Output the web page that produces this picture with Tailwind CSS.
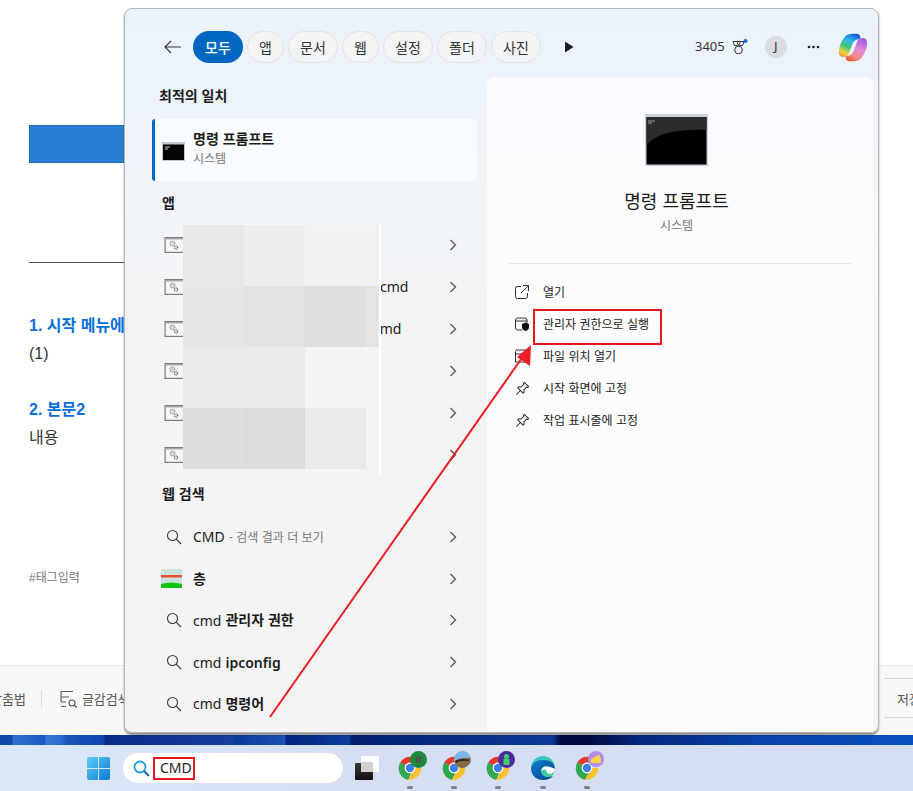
<!DOCTYPE html>
<html lang="ko">

<head>
    <meta charset="UTF-8">
    <title>Windows Search</title>
    <script src="https://cdn.jsdelivr.net/npm/@tailwindcss/browser@4"></script>
</head>

<body class="relative w-[913px] h-[791px] overflow-hidden bg-white font-['Noto_Sans_CJK_KR','Noto_Sans',sans-serif] text-[#1b1b1b]">
    <svg class="absolute w-0 h-0">
        <defs>
            <symbol id="search" viewBox="0 0 16 16">
                <circle cx="6.5" cy="6.5" r="5" fill="none" stroke="#3a3a3a" stroke-width="1.1" />
                <path d="M10.2 10.2 15 15" stroke="#3a3a3a" stroke-width="1.2" />
            </symbol>
            <symbol id="chev" viewBox="0 0 8 12">
                <path d="M1.5 1 6.5 6 1.5 11" fill="none" stroke="#5c5c5c" stroke-width="1.4" />
            </symbol>
            <symbol id="gears" viewBox="0 0 20 16">
                <rect x="0.6" y="0.6" width="18.800" height="14.800" fill="#f6f6f6" stroke="#7d7d7d" stroke-width="1.2" />
                <rect x="1" y="1" width="18" height="1.500" fill="#a8a8a8" />
                <circle cx="8" cy="6.500" r="2.300" fill="#d5dbe2" stroke="#8e98a4" stroke-width="1.200" stroke-dasharray="1 .6" />
                <circle cx="11.500" cy="10.500" r="1.600" fill="#e8e8e8" stroke="#5e6670" stroke-width="1.100" stroke-dasharray="1 .6" />
            </symbol>
            <symbol id="pin" viewBox="0 0 16 16">
                <path d="M10 1.5 14.5 6 13.5 7 12.5 6.6 9.6 9.5 9.6 12.4 8.6 13 3 7.4 3.6 6.4 6.5 6.4 9.4 3.5 9 2.5ZM5.6 10.4 1.5 14.5" fill="none" stroke="#2e2e2e" stroke-width="1.1" stroke-linejoin="round" />
            </symbol>
            <symbol id="chrome" viewBox="0 0 24 24">
                <path d="M12 12 2.2 6.5A12 12 0 0 1 23.2 7.6H12Z" fill="#e5392f" />
                <path d="M12 12 2.2 6.5A12 12 0 0 0 10 23.9L15 14Z" fill="#2fa84f" />
                <path d="M12 12H23.2A12 12 0 0 1 10 23.9L15 14Z" fill="#fbc02d" />
                <circle cx="12" cy="12" r="5.4" fill="#fff" />
                <circle cx="12" cy="12" r="4.2" fill="#3b82e6" />
            </symbol>
            <linearGradient id="edgeA" x1="0" y1="0" x2="1" y2="1">
                <stop offset="0" stop-color="#35c7d8" />
                <stop offset="1" stop-color="#3fd07f" />
            </linearGradient>
            <linearGradient id="edgeB" x1="0" y1="0" x2="1" y2="1">
                <stop offset="0" stop-color="#0f7fd0" />
                <stop offset="1" stop-color="#0a3f8f" />
            </linearGradient>
            <linearGradient id="winLogo" x1="0" y1="0" x2="1" y2="1">
                <stop offset="0" stop-color="#5fd0f5" />
                <stop offset="1" stop-color="#0a78d6" />
            </linearGradient>
            <linearGradient id="copL" x1="0.7" y1="0" x2="0.3" y2="1">
                <stop offset="0" stop-color="#1658d8" />
                <stop offset="0.3" stop-color="#2bb5ea" />
                <stop offset="0.6" stop-color="#3fc779" />
                <stop offset="0.85" stop-color="#f0d23a" />
                <stop offset="1" stop-color="#f39a3a" />
            </linearGradient>
            <linearGradient id="copR" x1="0.7" y1="0" x2="0.3" y2="1">
                <stop offset="0" stop-color="#f0583a" />
                <stop offset="0.2" stop-color="#f58a80" />
                <stop offset="0.55" stop-color="#e58ad8" />
                <stop offset="1" stop-color="#9a5be8" />
            </linearGradient>
        </defs>
    </svg>

    <!-- document behind the flyout -->
    <main class="w-[860px] h-[665px] pl-[29px] pt-[125px] font-['Liberation_Sans','Noto_Sans_CJK_KR',sans-serif]">
        <div class="h-[38px] bg-[#2a7ed2] border border-[#1f6fbc]"></div>
        <div class="mt-[99px] border-t border-[#555]"></div>
        <h2 class="mt-[51px] h-[24px] leading-[24px] text-[16px] font-bold text-[#0a6fdc]">1. 시작 메뉴에</h2>
        <p class="mt-[4px] h-[24px] leading-[24px] text-[16px] text-[#333]">(1)</p>
        <h2 class="mt-[32px] h-[24px] leading-[24px] text-[16px] font-bold text-[#0a6fdc]">2. 본문2</h2>
        <p class="mt-[4px] h-[24px] leading-[24px] text-[16px] text-[#333]">내용</p>
        <p class="mt-[119px] h-[18px] leading-[18px] text-[12px] text-[#777]">#태그입력</p>
    </main>

    <!-- editor toolbar -->
    <div class="relative h-[70px] bg-[#f8f8f8] border-t border-[#e8e8e8]">
        <div class="flex items-center h-[66px] text-[13px] text-[#555]">
            <span class="ml-[-10px]">맞춤법</span>
            <span class="ml-[15px] h-[18px] border-l border-[#dcdcdc]"></span>
            <svg class="ml-[18px] w-[18px] h-[18px]" viewBox="0 0 18 18" fill="none" stroke="#555" stroke-width="1.1">
                <path d="M1 1.5H13M1 1.5V12M1 7H9M1 12H6M1 16.5H6" />
                <circle cx="12" cy="13" r="3" />
                <path d="M14.2 15.2 17 17.5" />
            </svg>
            <span class="ml-[4px]">글감검색</span>
        </div>
        <div class="absolute left-[884px] top-[12px] w-[40px] h-[40px] border-y border-[#d8d8d8] pl-[13px] leading-[40px] text-[13px] text-[#555]">저장</div>
    </div>

    <!-- wallpaper strip -->
    <div class="h-[10px] bg-[linear-gradient(90deg,#0e4aa8_0,#0e4aa8_12px,#2f6fd0_13px,#1b5ac0_45px,#3478d6_46px,#2a6ad0_61px,#1a55b8_67px,#0f47b0_104px,#0a2a88_105px,#143fa0_233px,#0a3a98_234px,#1a52b5_285px,#04247f_286px,#0a3ca0_350px,#021f70_351px,#0a3a9a_553px,#000c40_560px,#000c40_590px,#04287f_640px,#0842a8_757px,#0a50c0_913px)]"></div>

    <!-- taskbar -->
    <footer class="relative flex items-center h-[46px] bg-linear-to-r from-[#dce8f8] to-[#d5def3] to-40%">
        <svg class="ml-[87px] w-[23px] h-[23px]" viewBox="0 0 23 23">
            <path d="M0 2Q0 0 2 0H11V11H0ZM12 0H21Q23 0 23 2V11H12ZM0 12H11V23H2Q0 23 0 21ZM12 12H23V21Q23 23 21 23H12Z" fill="url(#winLogo)" />
        </svg>
        <div class="ml-[13px] flex items-center w-[220px] h-[30px] rounded-full bg-white">
            <svg class="ml-[10px] w-[17px] h-[17px]" viewBox="0 0 17 17" fill="none" stroke-width="1.8">
                <circle cx="7" cy="7" r="5.5" stroke="#1e9bd8" />
                <path d="M11 11 16 16" stroke="#0f5fa8" />
            </svg>
            <span class="ml-[10px] text-[14px] leading-none font-['Noto_Sans',sans-serif] text-[#222]">CMD</span>
        </div>
        <!-- task view -->
        <div class="relative ml-[12px] w-[24px] h-[24px]">
            <div class="absolute right-0 top-0 w-[18px] h-[16px] bg-white rounded-[1px]"></div>
            <div class="absolute left-0 bottom-0 w-[18px] h-[17px] rounded-[1px] bg-linear-to-b from-[#3a3a3a] to-[#111]"></div>
            <div class="absolute left-[6px] top-[6px] w-[12px] h-[10px] bg-[#d0d0d0]"></div>
        </div>

        <div class="relative ml-[19px] w-[24px] h-[24px]">
            <svg class="w-[24px] h-[24px]"><use href="#chrome" /></svg>
            <svg class="absolute left-[12px] top-[-5px] w-[17px] h-[17px]" viewBox="0 0 17 17">
                <circle cx="8.5" cy="8.5" r="8.5" fill="#1d8a3c" />
                <rect x="5.5" y="5.5" width="6" height="6" fill="#4a5a4c" />
            </svg>
            <div class="absolute left-[9px] top-[30px] w-[6px] h-[3px] rounded-full bg-[#7b7f88]"></div>
        </div>
        <div class="relative ml-[20px] w-[24px] h-[24px]">
            <svg class="w-[24px] h-[24px]"><use href="#chrome" /></svg>
            <svg class="absolute left-[12px] top-[-5px] w-[17px] h-[17px]" viewBox="0 0 17 17">
                <circle cx="8.5" cy="8.5" r="8.5" fill="#7fb5e6" />
                <path d="M0.4 11Q5 6 16.6 7 17 9 16 12 12 17 8.5 17 3 17 0.4 11Z" fill="#8a6a3c" />
                <path d="M1 9.5Q6 7 15 8.5L15 10Q6 9 2 12Z" fill="#2a2a2a" />
            </svg>
            <div class="absolute left-[9px] top-[30px] w-[6px] h-[3px] rounded-full bg-[#7b7f88]"></div>
        </div>
        <div class="relative ml-[20px] w-[24px] h-[24px]">
            <svg class="w-[24px] h-[24px]"><use href="#chrome" /></svg>
            <svg class="absolute left-[12px] top-[-5px] w-[17px] h-[17px]" viewBox="0 0 17 17">
                <circle cx="8.5" cy="8.5" r="8.5" fill="#4b2aa0" />
                <circle cx="8.5" cy="5.5" r="2.6" fill="#3fce6a" />
                <rect x="5.5" y="8" width="6" height="6" fill="#3fce6a" />
            </svg>
            <div class="absolute left-[9px] top-[30px] w-[6px] h-[3px] rounded-full bg-[#7b7f88]"></div>
        </div>
        <div class="relative ml-[21px] w-[24px] h-[24px]">
            <svg class="w-[24px] h-[24px]" viewBox="0 0 24 24">
                <circle cx="12" cy="12" r="12" fill="url(#edgeA)" />
                <path d="M0 12C0 20 6 24 12 24 16 24 20 22.500 22 20 17 22 11 21 10 16 9.500 13 12 10.500 15 10.500 19 10.500 22.500 12 24 13 23.500 6 18 4 12 4 6 4 1 7 0 12Z" fill="url(#edgeB)" />
                <path d="M10 16C10 12.500 12.500 10.500 15 10.500 19 10.500 22.500 12 24 13 24 14.500 23 16.500 21 17.500 18 18.500 15 17 15.500 15 15.800 13.500 13 13 11.500 14 10.500 14.500 10 15 10 16Z" fill="#fff" />
            </svg>
            <div class="absolute left-[9px] top-[30px] w-[6px] h-[3px] rounded-full bg-[#7b7f88]"></div>
        </div>
        <div class="relative ml-[20px] w-[24px] h-[24px]">
            <svg class="w-[24px] h-[24px]"><use href="#chrome" /></svg>
            <svg class="absolute left-[13px] top-[-5px] w-[16px] h-[16px]" viewBox="0 0 16 16">
                <circle cx="8" cy="8" r="8" fill="#b28ce8" />
                <path d="M3 8 11 3.5 13 8V12H3Z" fill="#f4d64a" />
            </svg>
            <div class="absolute left-[9px] top-[30px] w-[6px] h-[3px] rounded-full bg-[#7b7f88]"></div>
        </div>
    </footer>

    <!-- search flyout -->
    <section class="absolute left-[124px] top-[8px] w-[755px] h-[725px] flex flex-col rounded-[8px] overflow-hidden border border-[#b5b5b5] shadow-[0_2px_2px_rgba(0,0,0,0.45)] bg-linear-to-b from-[#eaf2fb] via-[#f1f5fa] via-25% to-[#f4f4f4] to-45%">
        <!-- header -->
        <header class="flex items-center h-[68px] pt-[8px] shrink-0">
            <svg class="ml-[39px] w-[17px] h-[14px]" viewBox="0 0 17 14" fill="none" stroke="#333" stroke-width="1.1">
                <path d="M7 1 1 7 7 13M1 7H17" />
            </svg>
            <div class="ml-[12px] flex gap-[4px] text-[14px] text-[#333]">
                <span class="flex items-center justify-center w-[50px] h-[32px] rounded-full bg-[#0067c0] text-white font-medium">모두</span>
                <span class="flex items-center justify-center w-[37px] h-[32px] rounded-full border border-[#e3e3e3] bg-[#f3f4f5]">앱</span>
                <span class="flex items-center justify-center w-[50px] h-[32px] rounded-full border border-[#e3e3e3] bg-[#f3f4f5]">문서</span>
                <span class="flex items-center justify-center w-[37px] h-[32px] rounded-full border border-[#e3e3e3] bg-[#f3f4f5]">웹</span>
                <span class="flex items-center justify-center w-[50px] h-[32px] rounded-full border border-[#e3e3e3] bg-[#f3f4f5]">설정</span>
                <span class="flex items-center justify-center w-[50px] h-[32px] rounded-full border border-[#e3e3e3] bg-[#f3f4f5]">폴더</span>
                <span class="flex items-center justify-center w-[50px] h-[32px] rounded-full border border-[#e3e3e3] bg-[#f3f4f5]">사진</span>
            </div>
            <svg class="ml-[23px] w-[10px] h-[12px]" viewBox="0 0 10 12"><path d="M1 0.5 9.5 6 1 11.5Z" fill="#1b1b1b" /></svg>
            <span class="ml-[121px] text-[13px] font-['Noto_Sans',sans-serif] text-[#333]">3405</span>
            <svg class="ml-[7px] w-[16px] h-[16px]" viewBox="0 0 16 16" fill="none" stroke="#333" stroke-width="1">
                <path d="M1 2.500H12M1 2.500 2.500 6.500H5.500M12 2.500 10.500 6.500H7.500M5 2.500 6.500 7M8.500 2.500 6.500 7" />
                <circle cx="6.500" cy="11" r="3.800" />
                <circle cx="13.500" cy="2" r="2" fill="#0f6fd8" stroke="none" />
            </svg>
            <span class="ml-[17px] flex items-center justify-center w-[22px] h-[22px] rounded-full bg-[#d9dce1] text-[13px] font-['Noto_Sans',sans-serif] text-[#333]">J</span>
            <svg class="ml-[20px] w-[13px] h-[4px]" viewBox="0 0 13 4" fill="#222">
                <circle cx="2" cy="2" r="1.3" />
                <circle cx="6.5" cy="2" r="1.3" />
                <circle cx="11" cy="2" r="1.3" />
            </svg>
            <svg class="ml-[18px] w-[30px] h-[29px]" viewBox="0 0 30 29">
                <path d="M10 1.500C13 .5 18 .5 20 1 22 1.500 23 4 22 6 18 6 15.500 8 14 12L11 20C10 23 7 24 5 24 2 24 .5 21 1 17 2 10 6 3 10 1.500Z" fill="url(#copL)" />
                <path d="M10 1.500C13 .5 18 .5 20 1 22 1.500 23 4 22 6 18 6 15.500 8 14 12L11 20C10 23 7 24 5 24 2 24 .5 21 1 17 2 10 6 3 10 1.500Z" fill="url(#copR)" transform="rotate(180 15 14.500)" />
            </svg>
        </header>

        <div class="flex flex-1 min-h-0">
            <!-- results -->
            <div class="w-[362px] shrink-0 pl-[27px]">
                <h3 class="mt-[6px] ml-[7px] h-[24px] leading-[24px] text-[14px] font-bold">최적의 일치</h3>
                <div class="mt-[12px] flex items-center w-[325px] h-[62px] rounded-[3px] border-l-[3px] border-[#0067c0] bg-[#f8fbff]">
                    <svg class="ml-[7px] w-[23px] h-[19px] mt-[2px]" viewBox="0 0 23 19">
                        <rect width="23" height="19" fill="#c4c6c8" />
                        <rect x="1" y="2.500" width="21" height="15.500" fill="#050505" />
                        <path d="M3 5H8M3 7H6" stroke="#cfcfcf" stroke-width="1" />
                    </svg>
                    <div class="ml-[8px] mb-[5px]">
                        <div class="h-[20px] leading-[20px] text-[14px] font-bold">명령 프롬프트</div>
                        <div class="mt-[1px] h-[18px] leading-[18px] text-[12px] text-[#777]">시스템</div>
                    </div>
                </div>
                <h3 class="mt-[9px] ml-[10px] h-[24px] leading-[24px] text-[14px] font-bold">앱</h3>

                <div class="mt-[10px] w-[325px]">
                    <div class="flex items-center h-[42px]">
                        <svg class="ml-[12px] w-[21px] h-[16px]"><use href="#gears" /></svg>
                        <svg class="ml-auto mr-[20px] w-[8px] h-[12px]"><use href="#chev" /></svg>
                    </div>
                    <div class="flex items-center h-[42px]">
                        <svg class="ml-[12px] w-[21px] h-[16px]"><use href="#gears" /></svg>
                        <span class="ml-[195px] mb-[2px] text-[14px] font-['Noto_Sans',sans-serif]">cmd</span>
                        <svg class="ml-auto mr-[20px] w-[8px] h-[12px]"><use href="#chev" /></svg>
                    </div>
                    <div class="flex items-center h-[42px]">
                        <svg class="ml-[12px] w-[21px] h-[16px]"><use href="#gears" /></svg>
                        <span class="ml-[188px] mb-[2px] text-[14px] font-['Noto_Sans',sans-serif]">cmd</span>
                        <svg class="ml-auto mr-[20px] w-[8px] h-[12px]"><use href="#chev" /></svg>
                    </div>
                    <div class="flex items-center h-[42px]">
                        <svg class="ml-[12px] w-[21px] h-[16px]"><use href="#gears" /></svg>
                        <svg class="ml-auto mr-[20px] w-[8px] h-[12px]"><use href="#chev" /></svg>
                    </div>
                    <div class="flex items-center h-[42px]">
                        <svg class="ml-[12px] w-[21px] h-[16px]"><use href="#gears" /></svg>
                        <svg class="ml-auto mr-[20px] w-[8px] h-[12px]"><use href="#chev" /></svg>
                    </div>
                    <div class="flex items-center h-[42px]">
                        <svg class="ml-[12px] w-[21px] h-[16px]"><use href="#gears" /></svg>
                        <svg class="ml-auto mr-[20px] w-[8px] h-[12px]"><use href="#chev" /></svg>
                    </div>
                </div>

                <h3 class="mt-[5px] ml-[10px] h-[24px] leading-[24px] text-[14px] font-bold">웹 검색</h3>
                <div class="mt-[11px] w-[325px] text-[14px]">
                    <div class="flex items-center h-[41.75px]">
                        <svg class="ml-[14px] w-[16px] h-[16px]"><use href="#search" /></svg>
                        <span class="ml-[11px] font-['Noto_Sans',sans-serif]">CMD</span>
                        <span class="ml-[4px] text-[12px] text-[#777]">- 검색 결과 더 보기</span>
                        <svg class="ml-auto mr-[20px] w-[8px] h-[12px]"><use href="#chev" /></svg>
                    </div>
                    <div class="flex items-center h-[41.75px]">
                        <svg class="ml-[9px] w-[21px] h-[19px]" viewBox="0 0 21 19">
                            <rect width="21" height="15" fill="#c9e2dc" />
                            <rect y="6" width="21" height="2.500" fill="#ef4b35" />
                            <path d="M0 15Q10 12 21 15V19H0Z" fill="#12c312" />
                        </svg>
                        <span class="ml-[11px] font-bold">층</span>
                        <svg class="ml-auto mr-[20px] w-[8px] h-[12px]"><use href="#chev" /></svg>
                    </div>
                    <div class="flex items-center h-[41.75px]">
                        <svg class="ml-[14px] w-[16px] h-[16px]"><use href="#search" /></svg>
                        <span class="ml-[11px] font-['Noto_Sans',sans-serif]">cmd</span>
                        <span class="ml-[4px] mb-[1px] font-bold">관리자 권한</span>
                        <svg class="ml-auto mr-[20px] w-[8px] h-[12px]"><use href="#chev" /></svg>
                    </div>
                    <div class="flex items-center h-[41.75px]">
                        <svg class="ml-[14px] w-[16px] h-[16px]"><use href="#search" /></svg>
                        <span class="ml-[11px] font-['Noto_Sans',sans-serif]">cmd</span>
                        <span class="ml-[4px] font-['Noto_Sans',sans-serif] font-semibold">ipconfig</span>
                        <svg class="ml-auto mr-[20px] w-[8px] h-[12px]"><use href="#chev" /></svg>
                    </div>
                    <div class="flex items-center h-[41.75px]">
                        <svg class="ml-[14px] w-[16px] h-[16px]"><use href="#search" /></svg>
                        <span class="ml-[11px] font-['Noto_Sans',sans-serif]">cmd</span>
                        <span class="ml-[4px] mb-[1px] font-bold">명령어</span>
                        <svg class="ml-auto mr-[20px] w-[8px] h-[12px]"><use href="#chev" /></svg>
                    </div>
                </div>
            </div>

            <!-- preview pane -->
            <aside class="w-[386px] shrink-0 rounded-t-[8px] bg-linear-to-b from-[#f9fbfe] to-[#fcfcfc] to-40% flex flex-col items-center">
                <div class="flex flex-col items-center mr-[7px]">
                    <svg class="mt-[37px] w-[63px] h-[52px]" viewBox="0 0 63 52">
                        <rect width="63" height="52" fill="#cdd2da" />
                        <rect x="1.500" y="3" width="60" height="47.500" fill="#000" />
                        <path d="M1.500 3H61.500V16C38 15 10 18 1.500 32Z" fill="#2b2b2b" />
                        <path d="M3 7H10M3 9H7" stroke="#bbb" stroke-width="0.8" />
                    </svg>
                    <h1 class="mt-[20px] h-[28px] leading-[28px] text-[18px]">명령 프롬프트</h1>
                    <p class="mt-[2px] h-[18px] leading-[18px] text-[12px] text-[#777]">시스템</p>
                </div>
                <div class="mt-[29px] w-[342px] border-t border-[#e5e5e5]"></div>
                <ul class="mt-[12px] w-full pl-[28px] text-[12px]">
                    <li class="flex items-center h-[32px]">
                        <svg class="w-[14px] h-[14px]" viewBox="0 0 14 14" fill="none" stroke="#2e2e2e" stroke-width="1">
                            <path d="M6 1.500H2.500Q.5 1.500 .5 3.500V11.500Q.5 13.500 2.500 13.500H10.500Q12.500 13.500 12.500 11.500V8M8 .5H13.500V6M13.500 .5 6 8" />
                        </svg>
                        <span class="ml-[14px]">열기</span>
                    </li>
                    <li class="flex items-center h-[32px]">
                        <svg class="w-[14px] h-[14px]" viewBox="0 0 14 14" fill="none" stroke="#2e2e2e" stroke-width="1">
                            <path d="M7 13H2.500Q.5 13 .5 11V3Q.5 1 2.500 1H10Q12 1 12 3V6M.5 4H12" />
                            <path d="M10.500 5.500 14 7V10Q14 13 10.500 14 7 13 7 10V7Z" fill="#111" stroke="none" />
                        </svg>
                        <span class="ml-[14px]">관리자 권한으로 실행</span>
                    </li>
                    <li class="flex items-center h-[32px]">
                        <svg class="w-[14px] h-[14px]" viewBox="0 0 14 14" fill="none" stroke="#2e2e2e" stroke-width="1">
                            <path d="M.5 13V2.500Q.5 1 2 1H12Q13.500 1 13.500 2.500V13H.5ZM.5 5H7" />
                        </svg>
                        <span class="ml-[14px]">파일 위치 열기</span>
                    </li>
                    <li class="flex items-center h-[32px]">
                        <svg class="w-[15px] h-[15px]"><use href="#pin" /></svg>
                        <span class="ml-[13px]">시작 화면에 고정</span>
                    </li>
                    <li class="flex items-center h-[32px]">
                        <svg class="w-[15px] h-[15px]"><use href="#pin" /></svg>
                        <span class="ml-[13px]">작업 표시줄에 고정</span>
                    </li>
                </ul>
            </aside>
        </div>
    </section>

    <!-- blurred mosaic over the app names -->
    <div class="absolute left-[183px] top-[225px] w-[198px] h-[249px] border-r-2 border-white">
        <div class="grid grid-cols-[61px_61px_61px_13px] grid-rows-[61px_61px_61px_61px] w-[196px]">
            <div class="bg-[#e6e8e7]"></div>
            <div class="bg-[#eceeed]"></div>
            <div class="col-span-2 bg-[#f0f1f1]"></div>
            <div class="bg-[#e3e5e6]"></div>
            <div class="bg-[#e1e2e2]"></div>
            <div class="bg-[#dedede]"></div>
            <div class="bg-[#e4e4e4]"></div>
            <div class="bg-[#e9e9e9]"></div>
            <div class="bg-[#e9e9e9]"></div>
            <div class="bg-[#f3f3f3]"></div>
            <div class="bg-[#f4f4f4]"></div>
            <div class="bg-[#dddddd]"></div>
            <div class="bg-[#dbdbdb]"></div>
            <div class="bg-[#e9e9e9]"></div>
            <div class="bg-[#f4f4f4]"></div>
        </div>
    </div>

    <!-- red annotations -->
    <div class="absolute left-[533px] top-[309px] w-[129px] h-[36px] border-2 border-[#e8141e]"></div>
    <div class="absolute left-[153px] top-[757px] w-[42px] h-[23px] border-2 border-[#e8141e]"></div>
    <svg class="absolute left-0 top-0 w-[913px] h-[791px] pointer-events-none" viewBox="0 0 913 791">
        <path d="M270 717 524 355" stroke="#ee1c25" stroke-width="2" />
        <path d="M531 345 517 357 530 366Z" fill="#ee1c25" />
    </svg>
</body>

</html>
